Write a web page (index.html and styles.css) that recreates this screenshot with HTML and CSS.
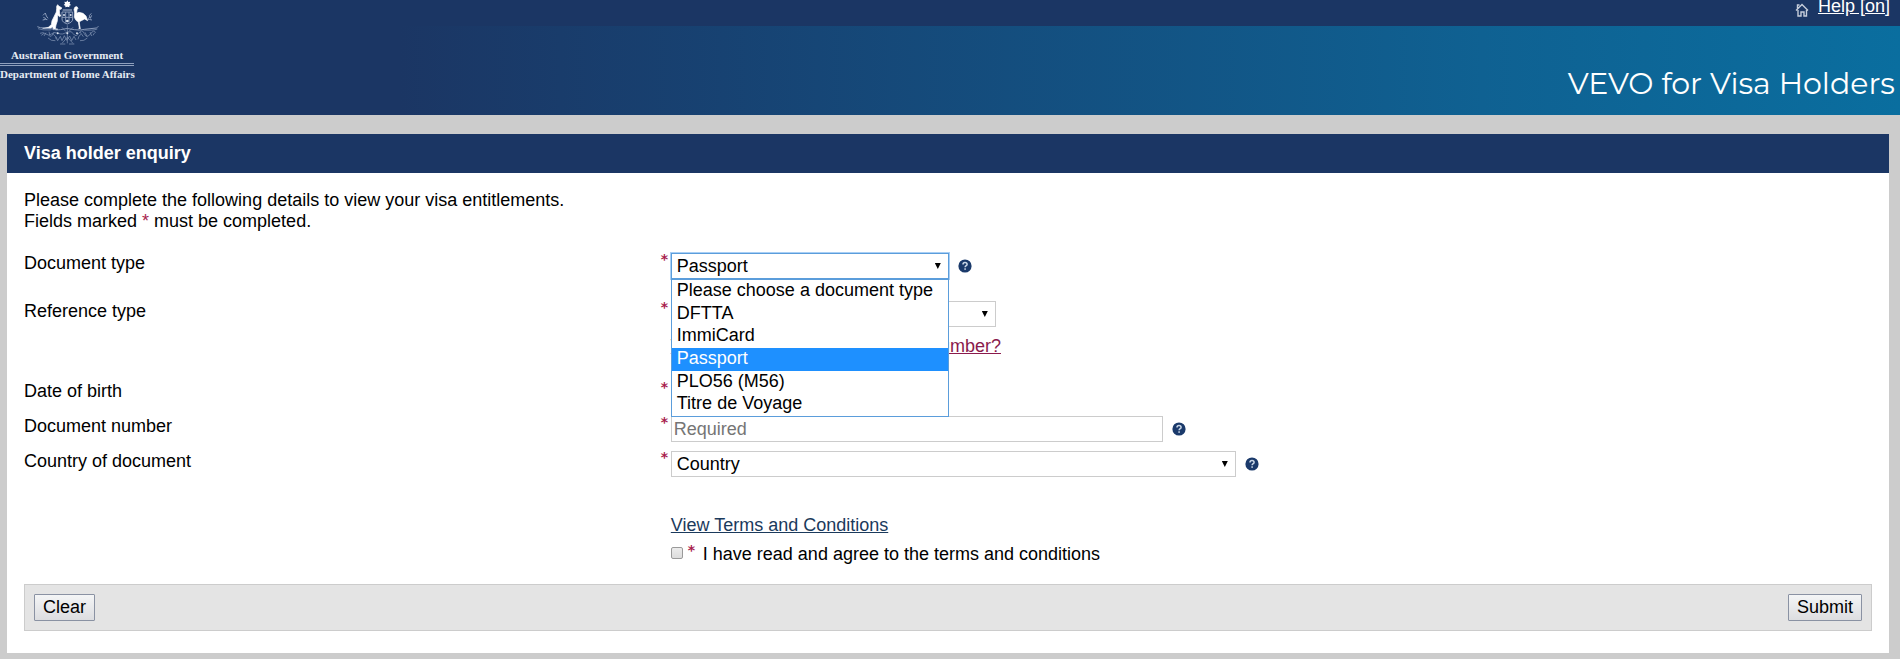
FILE: index.html
```html
<!DOCTYPE html>
<html lang="en">
<head>
  <meta charset="utf-8">
  <title>VEVO for Visa Holders</title>
  <link rel="stylesheet" href="styles.css">
</head>
<body>
  <svg class="sprite" width="0" height="0" aria-hidden="true">
    <symbol id="icon-help" viewBox="0 0 14 14">
      <circle cx="7" cy="7" r="6.6" fill="#1b3a6b"/>
      <path d="M5 5.500C5 4.200 5.900 3.600 7 3.600s2.100.6 2.100 1.800C9.100 6.600 7.100 6.700 7.100 8.300" fill="none" stroke="#c9d6e6" stroke-width="1.500"/>
      <rect x="6.300" y="9.300" width="1.600" height="1.500" fill="#c9d6e6"/>
    </symbol>
  </svg>

  <!-- Header -->
  <header class="header">
    <div class="logo">
      <svg class="crest" viewBox="100 0 198 138" role="img" aria-label="Coat of arms">
        <path fill="#fff" d="M200 1l3 5 6-1-2 6 4 4-5 2 0 5-6-2-6 2 0-5-5-2 4-4-2-6 6 1z"/>
        <g fill="#fff" stroke="#fff" stroke-width="2" stroke-linejoin="round">
          <path d="M171 14l4 5 8 4-1 4-6 2 1 12 3 7-3 2-6-5-1 18-4 12-2 11 8 2-14 1-2-9-6 5-24 0 17-3 9-8 2-12 6-12 7-14 1-11 0-6z"/>
          <path d="M220 28l3-7 6-1 3 5-3 4-1 11 7-3 12 3 9 8 5 14-9-5-10 5-6 3 1 11 2 10-5 0 2-2-3-18-7-5-5-9 1-13z"/>
        </g>
        <g fill="none" stroke="#8a9bb9" stroke-width="3">
          <path d="M184 36h32v21c0 8-7 12-16 15-9-3-16-7-16-15zM195 36v32M205 36v32M184 52h32"/>
          <path d="M186 30h28" stroke-width="4"/>
          <path d="M110 80q8 4 20 4l25 3q12 5 24 2 20-7 42 0 16 3 30-1l36-4q4-2 6-5"/>
          <path d="M126 60q10-3 14-1M127 46l7-7 3 9 5 7M128 52l8 4M274 60q-10-3-13-1M272 40l-6 7 3 8 4-9M262 56l6-5"/>
        </g>
        <g fill="none" stroke="#8a9bb9" stroke-width="2">
          <path d="M112 86q12 5 38 4M290 87q-12 5-42 3"/>
          <path d="M118 100q10-5 18 2t16 0 18-3 15 3 16-6 18 6 16-3 16 2 18 1 16-4"/>
          <path d="M122 106l8-6M130 108l6-10M145 95l4 16M152 109l8-12M238 96l10 14M253 97l6 12M268 96l5 12M277 106l5-8"/>
          <path d="M142 114q10 10 22 8M260 114q-10 10-22 8M158 103q8 4 9 15M241 103q-8 4-9 15"/>
          <path d="M166 110l5 12 8-13 5 13 7-15 7 14 9-13 6 14 7-13 6 11"/>
          <path d="M200 76v54M200 112l-16 18M200 112l17 18M184 82l11 12M217 82l-12 12M178 132h16M205 132h16"/>
        </g>
        <g fill="#dbe3ee">
          <circle cx="190" cy="45" r="3"/><circle cx="210" cy="45" r="3"/><circle cx="200" cy="63" r="4"/>
          <circle cx="171" cy="100" r="3"/><circle cx="229" cy="100" r="3"/><circle cx="200" cy="100" r="3"/>
        </g>
      </svg>
      <div class="logo-gov">Australian Government</div>
      <div class="logo-dept">Department of Home Affairs</div>
    </div>
    <div class="header-right">
      <nav class="topbar">
        <svg class="home" viewBox="0 0 14 14" role="img" aria-label="Home">
          <path d="M1 7.500L7 1.500l6 6M3 7v6h3V9h3v4h2.500V7M2.500 5.500V2h2" fill="none" stroke="#c5cddb" stroke-width="1.400"/>
        </svg>
        <a href="#help">Help [on]</a>
      </nav>
      <h1 class="app-title">VEVO for Visa Holders</h1>
    </div>
  </header>

  <!-- Enquiry form -->
  <main class="panel">
    <h2 class="panel-title">Visa holder enquiry</h2>
    <form class="panel-body" onsubmit="return false">
      <p class="intro">Please complete the following details to view your visa entitlements.<br>
        Fields marked <span class="mark">*</span> must be completed.</p>

      <div class="row row-type">
        <label class="label" for="doc-type">Document type</label>
        <span class="star">*</span>
        <div class="select select-type open">
          <select id="doc-type">
            <option>Please choose a document type</option>
            <option>DFTTA</option>
            <option>ImmiCard</option>
            <option selected>Passport</option>
            <option>PLO56 (M56)</option>
            <option>Titre de Voyage</option>
          </select>
          <ul class="options" role="listbox" aria-label="Document type">
            <li role="option">Please choose a document type</li>
            <li role="option">DFTTA</li>
            <li role="option">ImmiCard</li>
            <li role="option" class="selected" aria-selected="true">Passport</li>
            <li role="option">PLO56 (M56)</li>
            <li role="option">Titre de Voyage</li>
          </ul>
        </div>
        <svg class="help"><use href="#icon-help"/></svg>
      </div>

      <div class="row row-ref">
        <label class="label" for="ref-type">Reference type</label>
        <span class="star">*</span>
        <div class="field">
          <div class="select select-ref">
            <select id="ref-type"><option></option></select>
          </div>
          <a class="ref-link" href="#reference">What is a Transaction reference number?</a>
        </div>
      </div>

      <div class="row">
        <label class="label" for="dob">Date of birth</label>
        <span class="star">*</span>
        <input class="text text-dob" id="dob" type="text">
      </div>

      <div class="row">
        <label class="label" for="doc-number">Document number</label>
        <span class="star">*</span>
        <input class="text text-number" id="doc-number" type="text" placeholder="Required">
        <svg class="help"><use href="#icon-help"/></svg>
      </div>

      <div class="row">
        <label class="label" for="country">Country of document</label>
        <span class="star">*</span>
        <div class="select select-country">
          <select id="country"><option>Country</option></select>
        </div>
        <svg class="help"><use href="#icon-help"/></svg>
      </div>

      <div class="terms">
        <a href="#terms">View Terms and Conditions</a>
        <div class="agree">
          <input id="agree" type="checkbox">
          <span class="star">*</span>
          <label for="agree">I have read and agree to the terms and conditions</label>
        </div>
      </div>

      <div class="actions">
        <button type="reset">Clear</button>
        <button type="submit">Submit</button>
      </div>
    </form>
  </main>
</body>
</html>
```

FILE: styles.css
```css
* {
  margin: 0;
  padding: 0;
  box-sizing: border-box;
}

body {
  background: #ccc;
  color: #000;
  font-family: Arial, "Liberation Sans", sans-serif;
  font-size: 18px;
  line-height: 21px;
}

.sprite {
  display: block;
}

/* Header */
.header {
  display: flex;
  height: 115px;
  background: linear-gradient(90deg, #1b3664 21%, #174272 38%, #0f6192 78%, #0a6e9f 100%);
}

.logo {
  width: 134px;
  background: #1b3664;
  color: #e6ebf2;
  font-family: "Liberation Serif", serif;
  font-size: 11px;
  font-weight: bold;
  line-height: 16px;
  text-align: center;
  white-space: nowrap;
}

.crest {
  display: block;
  width: 66px;
  height: 46px;
  margin: 0 auto;
}

.logo-gov {
  padding-top: 1px;
}

.logo-dept {
  border-top: 3px double #8fa0bd;
}

.header-right {
  flex: 1;
}

.topbar {
  display: flex;
  justify-content: flex-end;
  gap: 9px;
  height: 26px;
  padding-right: 10px;
  background: #1b3664;
  line-height: 13px;
}

.topbar a {
  color: #fff;
}

.home {
  width: 14px;
  height: 14px;
  margin-top: 3px;
}

.app-title {
  padding: 38px 5px 0 0;
  color: #fff;
  font-family: Montserrat, Inter, sans-serif;
  font-size: 30px;
  font-weight: 400;
  line-height: 40px;
  text-align: right;
}

/* Panel */
.panel {
  margin: 19px 11px 6px 7px;
  background: #fff;
}

.panel-title {
  padding: 9px 17px;
  background: #1b3664;
  color: #fff;
  font-size: 18px;
  line-height: 21px;
}

.panel-body {
  padding: 17px 17px 22px;
}

.intro {
  margin-bottom: 21px;
}

.mark {
  color: #a81e4e;
}

/* Form rows */
.row {
  display: flex;
  align-items: flex-start;
  margin-bottom: 9px;
}

.row-type {
  margin-bottom: 22px;
}

.row-ref {
  margin-bottom: 24px;
}

.label {
  flex: 0 0 calc(35% - 10px);
}

.star {
  width: 10px;
  color: #a81e4e;
  font-family: "DejaVu Sans", sans-serif;
  font-size: 14px;
  font-weight: bold;
  line-height: 12px;
}

.select {
  position: relative;
  height: 26px;
}

.select::after {
  content: "";
  position: absolute;
  top: 10px;
  right: 8px;
  width: 6px;
  height: 6px;
  background: #000;
  clip-path: polygon(0 0, 100% 0, 50% 100%);
  pointer-events: none;
}

.select select,
.text {
  display: block;
  width: 100%;
  height: 26px;
  border: 1px solid #ccc;
  border-radius: 0;
  background: #fff;
  color: #000;
  font: inherit;
  outline: none;
}

.select select {
  appearance: none;
  padding: 0 5px;
}

.text {
  padding: 0 2px;
}

.text::placeholder {
  color: #757575;
}

.select-type {
  width: 278px;
}

.select-ref {
  width: 325px;
}

.select-country {
  width: 565px;
}

.text-dob {
  width: 160px;
}

.text-number {
  width: 492px;
}

.help {
  width: 14px;
  height: 14px;
  margin: 6px 0 0 9px;
}

/* Open drop-down */
.open select {
  border-color: #5b9ddb;
  box-shadow: 0 0 0 1px #a9cff5;
}

.options {
  position: absolute;
  z-index: 10;
  top: 26px;
  left: 0;
  right: 0;
  display: grid;
  grid-auto-rows: 1fr;
  height: 138px;
  border: 1px solid #5b9ddb;
  background: #fff;
  list-style: none;
}

.options li {
  padding-left: 5px;
}

.options .selected {
  background: #1e90ff;
  color: #fff;
}

.ref-link {
  display: block;
  margin-top: 9px;
  color: #8a1a4c;
}

/* Terms */
.terms {
  margin: 38px 0 19px 35%;
}

.terms a {
  color: #1b3a5c;
}

.agree {
  display: flex;
  gap: 5px;
  margin-top: 8px;
}

.agree input {
  appearance: none;
  width: 12px;
  height: 12px;
  margin-top: 3px;
  border: 1px solid #9a9a9a;
  border-radius: 2px;
  background: linear-gradient(#ececec, #dcdcdc);
}

/* Buttons */
.actions {
  display: flex;
  justify-content: space-between;
  padding: 9px;
  border: 1px solid #ccc;
  background: #e4e4e4;
}

.actions button {
  height: 27px;
  padding: 0 8px;
  border: 1px solid #8a92a3;
  border-radius: 1px;
  background: linear-gradient(#f4f5f6, #dcdde0);
  color: #000;
  font: inherit;
}
```
